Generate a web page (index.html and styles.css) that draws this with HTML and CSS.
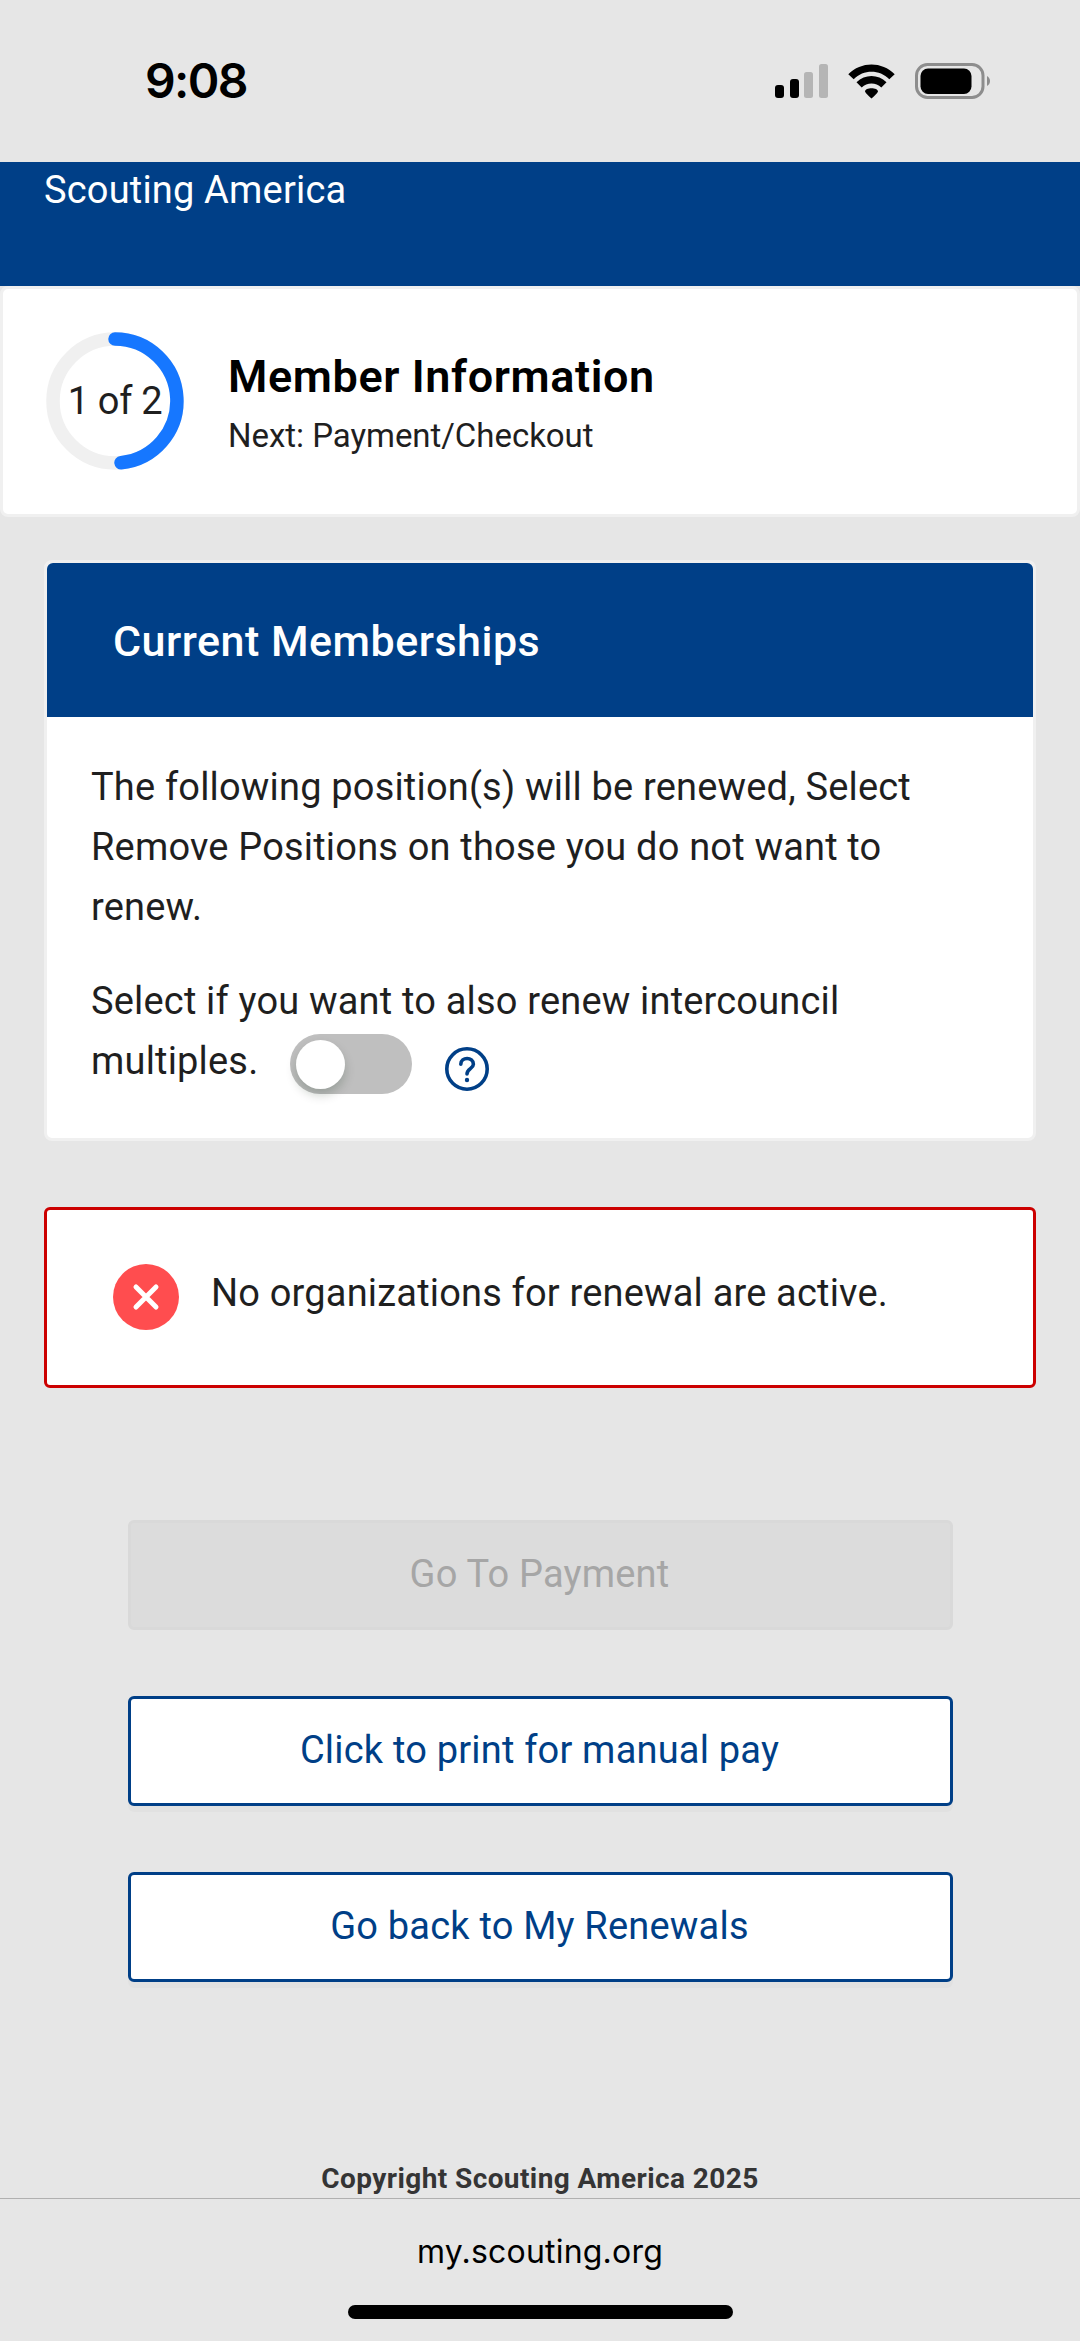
FILE: index.html
```
<!DOCTYPE html>
<html lang="en">
<head>
<meta charset="utf-8">
<title>Member Information</title>
<link rel="stylesheet" href="styles.css">
</head>
<body>
<div class="status-bar">
  <span class="time">9:08</span>
  <div class="indicators">
    <svg class="signal" width="53" height="34" viewBox="0 0 53 34">
      <rect x="0" y="21" width="9" height="13" rx="3"/>
      <rect x="15" y="15" width="9" height="19" rx="3"/>
      <rect class="faint" x="29" y="8" width="9" height="26" rx="2.5"/>
      <rect class="faint" x="44" y="0" width="9" height="34" rx="2.5"/>
    </svg>
    <svg class="wifi" width="47" height="35" viewBox="0 0 47 35">
      <path d="M0.3 10.3C13 -2.8 34 -2.8 46.7 10.3L41.3 15.2C31.5 5.3 15.5 5.3 5.7 15.2Z"/>
      <path d="M8.5 18.2C17 10 30 10 38.5 18.2L33.3 23.6C28 18.2 19 18.2 13.7 23.6Z"/>
      <path d="M17 27.5C17 23 30 23 30 27.5C29.5 29.5 26 32 23.5 34.5C21 32 17.5 29.5 17 27.5Z"/>
    </svg>
    <svg class="battery" width="76" height="36" viewBox="0 0 76 36">
      <rect class="shell" x="1.5" y="1.5" width="66.5" height="33" rx="11"/>
      <rect x="5.5" y="5.5" width="51" height="25.5" rx="7.5"/>
      <path class="nub" d="M72 13C76 15 76 21 72 23Z"/>
    </svg>
  </div>
</div>

<header class="banner">Scouting America</header>

<section class="progress">
  <div class="ring">
    <svg width="138" height="138" viewBox="0 0 138 138">
      <circle class="track" cx="69" cy="69" r="62"/>
      <path class="value" d="M69 7A62 62 0 0 1 75 130.7"/>
    </svg>
    <span class="ring-label">1 of 2</span>
  </div>
  <div class="step">
    <h1 class="step-title">Member Information</h1>
    <p class="step-next">Next: Payment/Checkout</p>
  </div>
</section>

<main class="content">
  <section class="card">
    <h2 class="card-head">Current Memberships</h2>
    <div class="card-body">
      <p>The following position(s) will be renewed, Select Remove Positions on those you do not want to renew.</p>
      <div class="option">
        <div>Select if you want to also renew intercouncil</div>
        <div class="option-row">
          <span>multiples.</span>
          <span class="toggle"><span class="knob"></span></span>
          <svg class="help" width="44" height="44" viewBox="0 0 44 44">
            <circle cx="22" cy="22" r="20.2"/>
            <path d="M15.8 17.2C15.8 9.6 28.4 9.6 28.4 17.2C28.4 21.6 22 21.8 22 27"/>
            <circle class="dot" cx="22" cy="33" r="2.2"/>
          </svg>
        </div>
      </div>
    </div>
  </section>

  <section class="alert">
    <svg width="66" height="66" viewBox="0 0 66 66">
      <circle class="alert-disc" cx="33" cy="33" r="33"/>
      <path class="alert-cross" d="M23 23L43 43M43 23L23 43"/>
    </svg>
    <span>No organizations for renewal are active.</span>
  </section>

  <div class="actions">
    <button class="btn btn-disabled" disabled>Go To Payment</button>
    <button class="btn">Click to print for manual pay</button>
    <button class="btn">Go back to My Renewals</button>
  </div>
</main>

<footer class="copyright">Copyright Scouting America 2025</footer>
<div class="browser-bar">
  <span class="url">my.scouting.org</span>
  <span class="home"></span>
</div>
</body>
</html>
```
FILE: styles.css
```
* { box-sizing: border-box; margin: 0; padding: 0; }

body {
  width: 1080px;
  height: 2341px;
  overflow: hidden;
  display: flex;
  flex-direction: column;
  background: #e6e6e6;
  color: #1f1f1f;
  font: 400 38px/60px Roboto, sans-serif;
  letter-spacing: 0.18px;
}

svg { display: block; flex: none; }

.status-bar {
  height: 162px;
  padding: 0 90px 0 145px;
  display: flex;
  justify-content: space-between;
  align-items: center;
}
.time {
  font: 600 48px/60px Inter, sans-serif;
  letter-spacing: -1.6px;
  color: #000;
}
.indicators { display: flex; align-items: center; }
.wifi { margin-left: 20px; }
.battery { margin-left: 20px; margin-right: -1px; }
.faint { fill: #b5b5b5; }
.shell { fill: none; stroke: #8d8d8d; stroke-width: 3; }
.nub { fill: #8d8d8d; }

.banner {
  height: 124px;
  padding: 0 44px;
  line-height: 57px;
  background: #003f87;
  color: #fff;
}

.progress {
  height: 231px;
  border: 3px solid #f0f0f0;
  border-radius: 8px;
  background: #fff;
  display: flex;
  padding: 43px 43px 0;
}
.ring {
  width: 138px;
  height: 138px;
  display: grid;
  place-items: center;
}
.ring > * { grid-area: 1 / 1; }
.ring-label { letter-spacing: -0.3px; }
.track, .value { fill: none; stroke-width: 13.5px; }
.track { stroke: #f0f0f0; }
.value { stroke: #1677ff; stroke-linecap: round; }
.step { margin: 15px 0 0 44px; }
.step-title {
  font-size: 45px;
  font-weight: 600;
  line-height: 60px;
  letter-spacing: 0.6px;
  color: #000;
}
.step-next {
  margin-top: 5px;
  font-size: 33px;
  line-height: 48px;
  letter-spacing: -0.04px;
}

.content { padding: 43px 44px 0; }

.card {
  height: 581px;
  border: 3px solid #f0f0f0;
  border-radius: 8px;
  background: #fff;
}
.card-head {
  height: 154px;
  padding: 48px 66px 0;
  border-radius: 6px 6px 0 0;
  background: #003f87;
  color: #fff;
  font-size: 43px;
  font-weight: 500;
  letter-spacing: 0.5px;
}
.card-body { padding: 40px 43px 0 44px; }
.option { margin-top: 34px; }
.option-row { height: 60px; display: flex; }
.toggle {
  width: 122px;
  height: 60px;
  margin: 3px 0 0 32px;
  padding: 6px;
  border-radius: 30px;
  background: #bfbfbf;
}
.knob {
  display: block;
  width: 49px;
  height: 49px;
  border-radius: 50%;
  background: #fff;
  box-shadow: 0 6px 11px rgba(0, 35, 11, 0.2);
}
.help { margin: 16px 0 0 33px; fill: none; stroke: #003f87; stroke-width: 3.6px; }
.help path { stroke-linecap: round; stroke-width: 3.6px; }
.help .dot { fill: #003f87; stroke: none; }

.alert {
  height: 181px;
  margin-top: 66px;
  padding: 54px 66px 0;
  border: 3px solid #cc0000;
  border-radius: 6px;
  background: #fff;
  display: flex;
  gap: 32px;
}
.alert > span { margin-top: -1px; }
.alert-disc { fill: #ff4d4f; }
.alert-cross { stroke: #fff; stroke-width: 5; stroke-linecap: round; }

.actions {
  margin: 132px 39px 0 84px;
  display: flex;
  flex-direction: column;
  width: 825px;
  gap: 66px;
}
.btn {
  height: 110px;
  padding: 0 2px 3px 0;
  border: 3px solid #003f87;
  border-radius: 6px;
  background: #fff;
  color: #003f87;
  font: inherit;
  letter-spacing: 0.2px;
  box-shadow: 0 6px 0 rgba(0, 0, 0, 0.02);
}
.btn-disabled {
  border-color: #d9d9d9;
  background: #dcdcdc;
  color: #a6a6a6;
  box-shadow: none;
}

.copyright {
  margin-top: 177px;
  height: 39px;
  text-align: center;
  font-size: 28px;
  font-weight: 700;
  line-height: 40px;
  letter-spacing: 0.41px;
  color: #353535;
}
.browser-bar {
  height: 143px;
  border-top: 1px solid #b0b0b0;
  padding-top: 33px;
  display: flex;
  flex-direction: column;
  align-items: center;
}
.url {
  font: 400 32px/40px Inter, sans-serif;
  letter-spacing: 0.2px;
  color: #000;
}
.home {
  width: 385px;
  height: 14px;
  margin-top: 33px;
  border-radius: 7px;
  background: #000;
}
```
